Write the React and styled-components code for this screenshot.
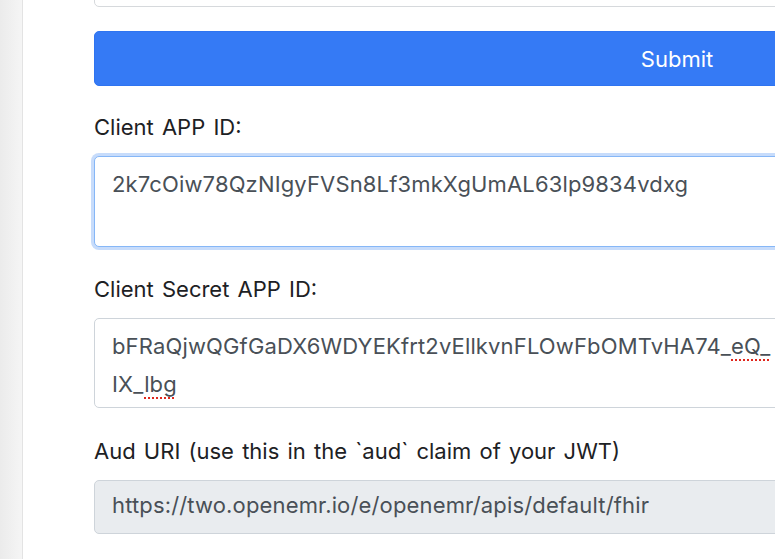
import React from "react";
import styled, { createGlobalStyle } from "styled-components";

const GlobalStyle = createGlobalStyle`
  html, body {
    margin: 0;
    padding: 0;
    background: #ffffff;
    overflow: hidden;
  }
  body {
    font-family: Inter, "Liberation Sans", Arial, sans-serif;
    -webkit-font-smoothing: antialiased;
  }
`;

const Page = styled.div`
  display: flex;
  width: 775px;
  height: 559px;
  overflow: hidden;
`;

const Sidebar = styled.div`
  flex: 0 0 22px;
  background: linear-gradient(to right, #ebebeb, #f5f5f5);
  border-right: 1px solid #e3e3e3;
`;

const Main = styled.main`
  flex: 1;
  min-width: 0;
  padding-left: 71px;
  overflow: hidden;
`;

const Form = styled.form`
  width: 1166px;
  margin-top: -47px;
  font-size: 22px;
  line-height: 33px;
  color: #1d2124;
`;

const Control = styled.div`
  box-sizing: border-box;
  width: 100%;
  height: ${(p) => p.$h}px;
  padding: 8px 17px;
  border: 1px solid ${(p) => (p.$focus ? "#86b7f7" : p.$muted ? "#d6d9dc" : "#ced4da")};
  border-radius: 5px;
  background: ${(p) => (p.$disabled ? "#e9ecef" : "#ffffff")};
  color: #495057;
  line-height: ${(p) => p.$lh || 33}px;
  letter-spacing: 0.15px;
  box-shadow: ${(p) => (p.$focus ? "0 0 0 3px #c7dcfb" : "none")};
  white-space: nowrap;
  overflow: hidden;
`;

const SubmitButton = styled.button`
  display: block;
  box-sizing: border-box;
  width: 100%;
  height: 55px;
  margin-top: 24px;
  padding: 1px 0 0;
  border: 1px solid #2f74f0;
  border-radius: 5px;
  background: #357af5;
  color: #ffffff;
  font-family: inherit;
  font-size: 22px;
  line-height: 33px;
  cursor: pointer;
`;

const Group = styled.div`
  margin-top: ${(p) => p.$top}px;
`;

const Label = styled.label`
  display: block;
  margin-bottom: 12px;
  word-spacing: 2px;
`;

const Line = styled.div`
  display: block;
`;

const Spell = styled.span`
  text-decoration: underline dotted #e0261c;
  text-decoration-thickness: 2px;
  text-underline-offset: 5px;
`;

export default function App() {
  return (
    <>
      <GlobalStyle />
      <Page>
        <Sidebar />
        <Main>
          <Form onSubmit={(e) => e.preventDefault()}>
            <Control $h={54} $muted />
            <SubmitButton type="submit">Submit</SubmitButton>
            <Group $top={25}>
              <Label>Client APP ID:</Label>
              <Control $h={91} $lh={38} $focus>
                <Line>2k7cOiw78QzNIgyFVSn8Lf3mkXgUmAL63lp9834vdxg</Line>
              </Control>
            </Group>
            <Group $top={26}>
              <Label>Client Secret APP ID:</Label>
              <Control $h={90} $lh={38}>
                <Line>
                  bFRaQjwQGfGaDX6WDYEKfrt2vEllkvnFLOwFbOMTvHA74_<Spell>eQ_</Spell>
                </Line>
                <Line>
                  IX_<Spell>lbg</Spell>
                </Line>
              </Control>
            </Group>
            <Group $top={27}>
              <Label>Aud URI (use this in the `aud` claim of your JWT)</Label>
              <Control $h={54} $disabled>
                <Line>https://two.openemr.io/e/openemr/apis/default/fhir</Line>
              </Control>
            </Group>
          </Form>
        </Main>
      </Page>
    </>
  );
}
